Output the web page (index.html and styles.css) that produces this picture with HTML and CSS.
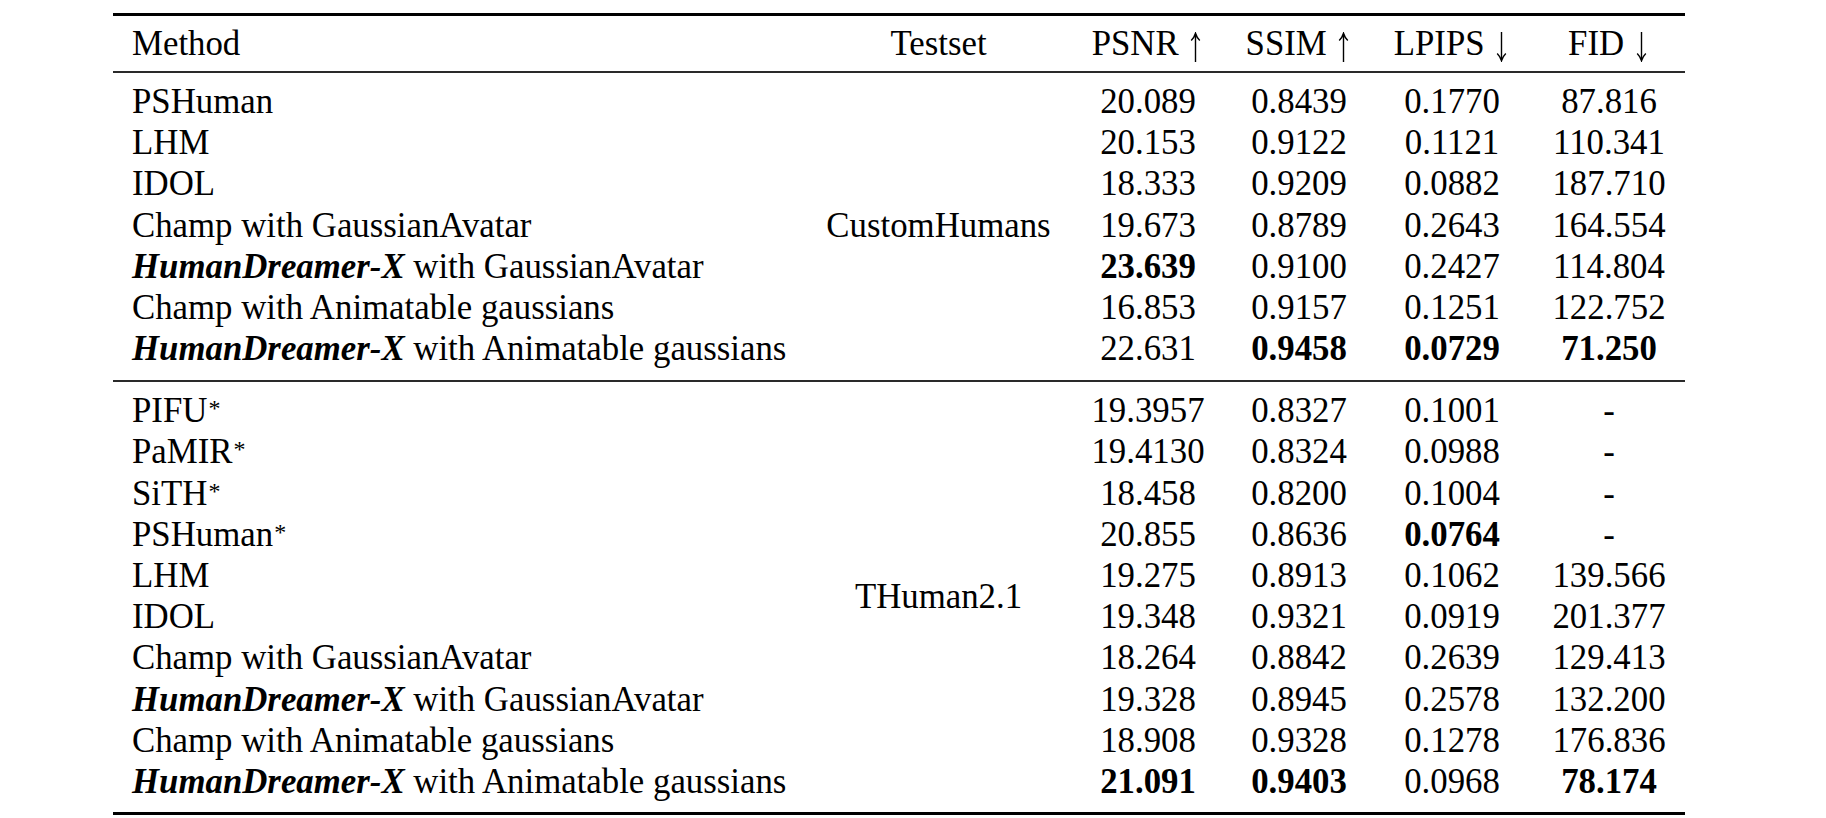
FILE: index.html
```html
<!DOCTYPE html>
<html>
<head>
<meta charset="utf-8">
<link rel="stylesheet" href="styles.css">
</head>
<body>
<div class="table">
  <div class="rule heavy"></div>
  <div class="grid head">
    <div class="method">Method</div>
    <div class="c">Testset</div>
    <div class="c">PSNR <svg class="arr" viewBox="0 0 17 30"><path d="M8.5 1.5V30M4.2 8.5Q7.2 5.5 8.5 1.2Q9.8 5.5 12.8 8.5"/></svg></div>
    <div class="c">SSIM <svg class="arr" viewBox="0 0 17 30"><path d="M8.5 1.5V30M4.2 8.5Q7.2 5.5 8.5 1.2Q9.8 5.5 12.8 8.5"/></svg></div>
    <div class="c">LPIPS <svg class="arr" viewBox="0 0 17 30"><path d="M8.5 0V28.5M4.2 21.5Q7.2 24.5 8.5 28.8Q9.8 24.5 12.8 21.5"/></svg></div>
    <div class="c">FID <svg class="arr" viewBox="0 0 17 30"><path d="M8.5 0V28.5M4.2 21.5Q7.2 24.5 8.5 28.8Q9.8 24.5 12.8 21.5"/></svg></div>
  </div>
  <div class="rule thin"></div>
  <div class="grid body g1">
    <div class="c testset">CustomHumans</div>

    <div class="method">PSHuman</div>
    <div class="c">20.089</div><div class="c">0.8439</div><div class="c">0.1770</div><div class="c">87.816</div>

    <div class="method">LHM</div>
    <div class="c">20.153</div><div class="c">0.9122</div><div class="c">0.1121</div><div class="c">110.341</div>

    <div class="method">IDOL</div>
    <div class="c">18.333</div><div class="c">0.9209</div><div class="c">0.0882</div><div class="c">187.710</div>

    <div class="method">Champ with GaussianAvatar</div>
    <div class="c">19.673</div><div class="c">0.8789</div><div class="c">0.2643</div><div class="c">164.554</div>

    <div class="method"><b class="hd">HumanDreamer-X</b> with GaussianAvatar</div>
    <div class="c"><b>23.639</b></div><div class="c">0.9100</div><div class="c">0.2427</div><div class="c">114.804</div>

    <div class="method">Champ with Animatable gaussians</div>
    <div class="c">16.853</div><div class="c">0.9157</div><div class="c">0.1251</div><div class="c">122.752</div>

    <div class="method"><b class="hd">HumanDreamer-X</b> with Animatable gaussians</div>
    <div class="c">22.631</div><div class="c"><b>0.9458</b></div><div class="c"><b>0.0729</b></div><div class="c"><b>71.250</b></div>
  </div>
  <div class="rule thin"></div>
  <div class="grid body g2">
    <div class="c testset">THuman2.1</div>

    <div class="method">PIFU<span class="star">*</span></div>
    <div class="c">19.3957</div><div class="c">0.8327</div><div class="c">0.1001</div><div class="c">-</div>

    <div class="method">PaMIR<span class="star">*</span></div>
    <div class="c">19.4130</div><div class="c">0.8324</div><div class="c">0.0988</div><div class="c">-</div>

    <div class="method">SiTH<span class="star">*</span></div>
    <div class="c">18.458</div><div class="c">0.8200</div><div class="c">0.1004</div><div class="c">-</div>

    <div class="method">PSHuman<span class="star">*</span></div>
    <div class="c">20.855</div><div class="c">0.8636</div><div class="c"><b>0.0764</b></div><div class="c">-</div>

    <div class="method">LHM</div>
    <div class="c">19.275</div><div class="c">0.8913</div><div class="c">0.1062</div><div class="c">139.566</div>

    <div class="method">IDOL</div>
    <div class="c">19.348</div><div class="c">0.9321</div><div class="c">0.0919</div><div class="c">201.377</div>

    <div class="method">Champ with GaussianAvatar</div>
    <div class="c">18.264</div><div class="c">0.8842</div><div class="c">0.2639</div><div class="c">129.413</div>

    <div class="method"><b class="hd">HumanDreamer-X</b> with GaussianAvatar</div>
    <div class="c">19.328</div><div class="c">0.8945</div><div class="c">0.2578</div><div class="c">132.200</div>

    <div class="method">Champ with Animatable gaussians</div>
    <div class="c">18.908</div><div class="c">0.9328</div><div class="c">0.1278</div><div class="c">176.836</div>

    <div class="method"><b class="hd">HumanDreamer-X</b> with Animatable gaussians</div>
    <div class="c"><b>21.091</b></div><div class="c"><b>0.9403</b></div><div class="c">0.0968</div><div class="c"><b>78.174</b></div>
  </div>
  <div class="rule heavy"></div>
</div>
</body>
</html>
```
FILE: styles.css
```css
html, body {
  margin: 0;
  padding: 0;
  background: #fff;
}

body {
  font-family: "Liberation Serif", "Times New Roman", serif;
  font-size: 34.8px;
  color: #000;
}

.table {
  width: 1572px;
  margin-left: 113px;
  padding-top: 13px;
}

.rule {
  background: #000;
}

.rule.heavy {
  height: 3px;
}

.rule.thin {
  height: 2px;
  background: #2a2a2a;
}

.grid {
  display: grid;
  grid-template-columns: 711px 229px 190px 112px 194px 120px;
  line-height: 41.2px;
}

.head {
  grid-template-rows: 41.2px;
  padding: 7.2px 0 7px;
}

.g1 {
  grid-template-rows: repeat(7, 41.2px);
  padding: 7.6px 0 10.8px;
}

.g2 {
  grid-template-rows: repeat(10, 41.2px);
  padding: 8.2px 0 9.8px;
}

.method {
  grid-column: 1;
  padding-left: 19px;
  white-space: nowrap;
}

.c {
  text-align: center;
  white-space: nowrap;
  display: flex;
  justify-content: center;
}

.c > * {
  flex: none;
}

.head .c {
  display: block;
}

.testset {
  grid-column: 2;
  align-self: center;
}

.g1 .testset {
  grid-row: 1 / span 7;
}

.g2 .testset {
  grid-row: 1 / span 10;
}

b {
  font-weight: bold;
}

.hd {
  font-style: italic;
}

.star {
  font-size: 24px;
  line-height: 0;
  vertical-align: 6px;
  margin-left: 1px;
}

.arr {
  width: 17px;
  height: 30px;
  vertical-align: -7px;
  fill: none;
  stroke: #000;
  stroke-width: 1.4;
}
```
